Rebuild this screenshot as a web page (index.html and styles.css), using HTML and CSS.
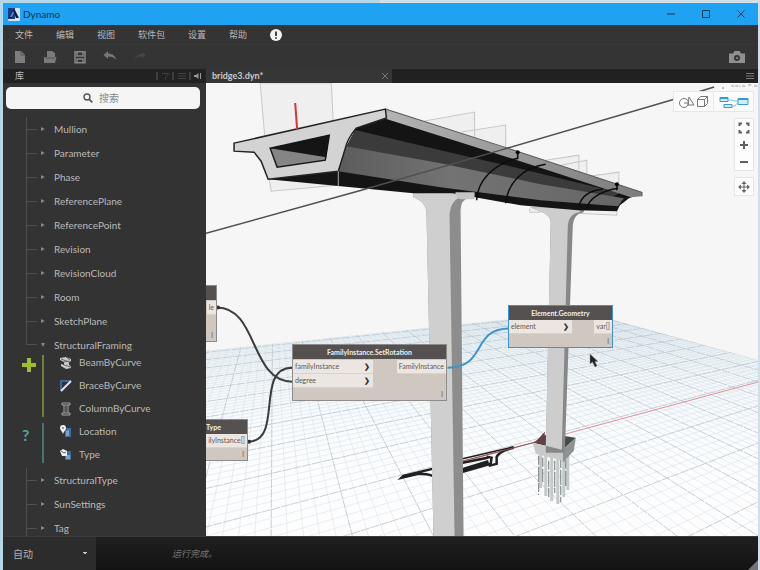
FILE: index.html
```html
<!DOCTYPE html>
<html lang="zh-CN">
<head>
<meta charset="utf-8">
<title>Dynamo</title>
<link rel="stylesheet" href="styles.css">
</head>
<body>
<div class="window">
  <header class="titlebar">
    <svg class="logo" viewBox="0 0 12 13"><rect width="12" height="13" rx="1" fill="#d6e6f6"/><path d="M0 0h7v11H0z" fill="#193a86"/><path d="M1 10L5 2h2l4 8H8L6 5l-2 5z" fill="#101c4c"/><path d="M5 3l-3 6h2l2-4z" fill="#5d8ad0"/></svg>
    <h1>Dynamo</h1>
    <div class="caption">
      <button aria-label="最小化"><svg viewBox="0 0 10 10"><path d="M1 5h8"/></svg></button>
      <button aria-label="最大化"><svg viewBox="0 0 10 10"><path d="M1.500 1.500h7v7h-7z"/></svg></button>
      <button aria-label="关闭"><svg viewBox="0 0 10 10"><path d="M1.500 1.500l7 7M8.500 1.500l-7 7"/></svg></button>
    </div>
  </header>

  <nav class="menu">
    <button>文件</button><button>编辑</button><button>视图</button><button>软件包</button><button>设置</button><button>帮助</button>
    <button class="alert" aria-label="通知"><svg viewBox="0 0 12 12"><circle cx="6" cy="6" r="6" fill="#f3f3f3"/><path d="M6 2.500v4.500M6 8.200v1.600" stroke="#333" stroke-width="1.800"/></svg></button>
  </nav>

  <div class="toolbar">
    <button aria-label="新建"><svg viewBox="0 0 14 14"><path d="M2 1h6l4 4v8H2z" fill="#7d7d7d"/><path d="M8 1v4h4" fill="none" stroke="#555"/></svg></button>
    <button aria-label="打开"><svg viewBox="0 0 14 14"><path d="M4 1h5l3 2v4h1.500l-1.500 6H1V7h3z" fill="#7a7a7a"/><path d="M2 8h10" stroke="#555"/></svg></button>
    <button aria-label="保存"><svg viewBox="0 0 14 14"><path d="M2 1.700h10v11H2zM4 2v4h6V2M4 12V9h6v3" fill="none" stroke="#858585" stroke-width="1.500"/></svg></button>
    <button aria-label="撤消"><svg viewBox="0 0 14 14"><path d="M.5 5L5 1v2.500c4 0 7 2 8.500 6.500C11 7 8.500 6.500 5 6.500V9z" fill="#777"/></svg></button>
    <button aria-label="重做"><svg viewBox="0 0 14 14"><path d="M12.500 5L9 2v2C6 4 3 6 1 9.500 4 7 6 6.500 9 6.500V8z" fill="#474747"/></svg></button>
    <button class="camera" aria-label="相机"><svg viewBox="0 0 16 12"><path d="M0 2.500h4L5.500 0h5L12 2.500h4V12H0z" fill="#909090"/><circle cx="8" cy="7" r="3" fill="#333"/><circle cx="8" cy="7" r="1.300" fill="#777"/></svg></button>
  </div>

  <main class="work">
    <aside class="library">
      <div class="library-head">
        <h2>库</h2>
        <svg viewBox="0 0 46 8"><path d="M1 0v8M17 0v8M34 0v8" stroke="#5a5a5a"/><path d="M6 1.500h7L9.500 5v3M22 1.500h8M22 4h8M22 6.500h8" stroke="#404040" fill="none"/><path d="M38 3h2l2.500-2v6L40 5h-2z" fill="#999"/><path d="M44.500 1v6" stroke="#999"/></svg>
      </div>
      <label class="search">
        <svg viewBox="0 0 10 10"><circle cx="4" cy="4" r="3" fill="none" stroke="#555" stroke-width="1.400"/><path d="M6.300 6.300L9.300 9.300" stroke="#555" stroke-width="1.700"/></svg>
        <input type="text" placeholder="搜索" aria-label="搜索">
      </label>
      <ul class="tree lead">
        <li>Mullion</li><li>Parameter</li><li>Phase</li><li>ReferencePlane</li><li>ReferencePoint</li><li>Revision</li><li>RevisionCloud</li><li>Room</li><li>SketchPlane</li><li class="open">StructuralFraming</li>
      </ul>
      <div class="members">
        <div class="group create">
          <svg class="badge" viewBox="0 0 14 14"><path d="M5 0h4v5h5v4H9v5H5V9H0V5h5z" fill="#9dbf28"/></svg>
          <ul>
            <li><svg viewBox="0 0 14 14"><path d="M1 2l6-1 5 2v2l-2 1v3l2 1v2l-5 1-5-3V8l3 1V6L1 4z" fill="#c9c9c9"/><path d="M2 3l8 3M5 6l5-1M5 9l7 2M7 1l4 3" stroke="#686868"/></svg>BeamByCurve</li>
            <li><svg viewBox="0 0 14 14"><path d="M2 12V2H12" fill="none" stroke="#3d6596" stroke-width="2"/><path d="M2 12L12 2" stroke="#d9e6f2" stroke-width="2"/></svg>BraceByCurve</li>
            <li><svg viewBox="0 0 14 14"><path d="M3 1h8v2H3zM3 11h8v2H3zM5 3v8M9 3v8" fill="none" stroke="#a5a5a5"/><path d="M7 3v8" stroke="#777"/></svg>ColumnByCurve</li>
          </ul>
        </div>
        <div class="group query">
          <span class="badge">?</span>
          <ul>
            <li><svg viewBox="0 0 14 14"><path d="M6 3h6v9H6z" fill="#3f6da2"/><path d="M7 6l3-1v6H7z" fill="#7da2ca"/><path d="M1 3a3 3 0 016 0c0 2-2 3-3 6C3 6 1 5 1 3z" fill="#eee"/><circle cx="4" cy="3" r="1" fill="#777"/></svg>Location</li>
            <li><svg viewBox="0 0 14 14"><path d="M6 3h6v9H6z" fill="#3f6da2"/><path d="M7 7h4v4H7z" fill="#7da2ca"/><path d="M1 3l3-2 4 2v5H3z" fill="#eee"/><path d="M2 3l3 2 2-1" stroke="#666" fill="none"/></svg>Type</li>
          </ul>
        </div>
      </div>
      <ul class="tree tail"><li>StructuralType</li><li>SunSettings</li><li>Tag</li></ul>
    </aside>

    <section class="workspace">
      <div class="tabs">
        <div class="tab"><span>bridge3.dyn*</span><button aria-label="关闭选项卡"><svg viewBox="0 0 8 8"><path d="M1 1l6 6M7 1L1 7" stroke="#777"/></svg></button></div>
        <button class="more" aria-label="更多"><svg viewBox="0 0 8 8"><path d="M0 1.500h8M0 4h8M0 6.500h8" stroke="#777"/></svg></button>
      </div>

      <div class="canvas">
        <svg class="scene" viewBox="206 83 552 452" preserveAspectRatio="xMinYMin slice">
          <defs>
            <clipPath id="ground"><path d="M206 350L582 311L900 399V700H206z"/></clipPath>
            <linearGradient id="haze" x1="0" y1="0" x2="0" y2="1"><stop offset="0" stop-color="#e9f2f7"/><stop offset=".2" stop-color="#f5f9fb"/><stop offset=".45" stop-color="#fdfdfe"/></linearGradient>
            <linearGradient id="deck" x1="0" y1="0" x2="1" y2="0"><stop offset="0" stop-color="#b4b4b4"/><stop offset="1" stop-color="#7c7c7c"/></linearGradient>
            <linearGradient id="web" x1="0" y1="0" x2="1" y2="0"><stop offset="0" stop-color="#5c5c5c"/><stop offset=".4" stop-color="#737373"/><stop offset="1" stop-color="#666"/></linearGradient>
          </defs>
          <g clip-path="url(#ground)" fill="none">
            <path d="M206 300H900V700H206z" fill="url(#haze)"/>
            <path id="minor" stroke="#d2dfe6" stroke-width=".5"/>
            <path id="major" stroke="#b9c4ca" stroke-width=".8" stroke-dasharray="9 1"/>
          </g>
          <path d="M432 469L758 381" stroke="#df8f98" fill="none"/>

          <g class="planes">
            <path d="M260 83L265 140L333 122L331 83z"/>
            <path d="M269 178L271 191L336 185"/>
            <path d="M424 121L474 112V138M461 132L505 125V148M545 160L578 155V170M560 165L586 160V173M588 176L618 172V185M529 208V212H540M576 213L616 215V210"/>
          </g>

          <g id="piles">
            <path d="M540 452V487M545 454V495M551 456V500M557 458V503M563 458V496M567 455V489" stroke="#c4c9c9" stroke-width="3"/>
            <path d="M538 455V494M542 457V481M548 460V498M554 460V492M560 458V501M565 459V486" stroke="#707676" stroke-dasharray="9 2 15 1"/>
            <path d="M532 442L547 433L575 437L562 449z" fill="#444b48"/>
            <path d="M532 442L562 449V460L535 453z" fill="#c7cac9"/><path d="M562 449L575 437L573 450L562 462z" fill="#8d9391"/>
            <path d="M534 442L544 431L544 443z" fill="#673e45"/>
          </g>

          <g id="profile" fill="none" stroke="#202020">
            <path d="M432 468L403 475L401 477L418 473Q427 473 432 475" stroke-width="2.500"/>
            <path d="M462 458L513 446" stroke-width="1.500"/>
            <path d="M513 447Q499 450 496 456V463L488 465M486 456L491 457L490 463L462 471M487 457L462 462" stroke-width="2.500"/>
            <path d="M462 469L488 461" stroke-width="4"/>
            <path d="M440 466L536 441" stroke="#8d555a"/>
          </g>

          <g id="piers">
            <path d="M413 192H470V197Q460 199 460 210L463 535H433L426 213Q426 202 413 197z" fill="#8d8d8d"/>
            <path d="M413 192H465L464 196Q450 198 449 215L454 535H433L426 213Q426 202 413 197z" fill="#cfcfcf"/>
            <path d="M529 207H583V212Q573 213 572 225L564 452H545L550 222Q549 214 539 211z" fill="#878787"/>
            <path d="M529 207H579V212Q568 213 567 226L561 449L545 445L550 222Q549 214 539 211z" fill="#cdcdcd"/>
          </g>

          <g id="girder">
            <path d="M386 117L641 193L628 198L619 205L616 211L577 210L520 205L452 193L413 193L268 179L338 170L345 148L356 128z" fill="#141414"/>
            <path d="M355 130L440 150L505 165L600 188L620 192L608 199L540 187L440 166L346 147z" fill="#3b3b3b"/>
            <path d="M346 146L440 163L540 184L623 198L617 206L540 200L440 187L338 171z" fill="url(#web)"/>
            <path d="M385 109L507 148L641 192V196L630 197L507 157L386 119z" fill="url(#deck)"/>
            <path d="M385 109L507 148L641 192V196" fill="none" stroke="#555"/>
            <path d="M234 143L385 109L386 118L356 128Q347 139 345 148L338 171L268 179L261 161L254 152L234 151z" fill="#d3d3d3" stroke="#242424" stroke-width="1.500"/>
            <path d="M270 148L329 135L325 160L277 167z" fill="#858585" stroke="#171717" stroke-width="1.500"/>
            <path d="M270 148L329 135L326 157z" fill="#151515"/>
            <path d="M338 171V186" stroke="#aaa"/>
            <path d="M455 192H474V199H460L455 196z" fill="#c4c4c4"/>
            <g fill="none" stroke="#0d0d0d" stroke-width="1.500"><path d="M476 200C477 181 492 164 517 158M505 203C507 184 521 167 545 164M578 206C581 194 590 190 602 189M586 208C588 199 599 191 617 188M517 152V159M616 183V190"/></g>
            <circle cx="517" cy="152" r="2"/><circle cx="616" cy="184" r="2"/>
          </g>
          <path d="M206 233L361 190L500 150L674 99L713 87" fill="none" stroke="#505050" stroke-width="1.500"/>
          <path d="M295 103L297 130" stroke="#e0303d" stroke-width="2"/>
          <path d="M730 86h9M741 86h4M747 85h3M753 86h3" stroke="#999" stroke-dasharray="3 1"/><circle cx="722" cy="88" r="1" fill="#aaa"/>

          <g id="wires" fill="none" stroke="#3c3c3c" stroke-width="2">
            <path d="M217 307C258 307 250 381 292 381M248 441C284 441 254 367 292 367"/>
            <path d="M447 367C487 367 470 328 509 328" stroke="#3e92cf"/>
          </g>
          <circle cx="218" cy="307" r="2" fill="#333"/><circle cx="249" cy="441" r="2" fill="#333"/>
        </svg>

        <article class="node source">
          <h3>&nbsp;</h3><div class="ports"><div class="outs"><span>le</span></div></div><footer>l</footer>
        </article>
        <article class="node type">
          <h3>Type</h3><div class="ports"><div class="outs"><span>ilyInstance[]</span></div></div><footer>l</footer>
        </article>
        <article class="node rotation">
          <h3>FamilyInstance.SetRotation</h3>
          <div class="ports"><div class="ins"><span>familyInstance<b>❯</b></span><span>degree<b>❯</b></span></div><div class="outs"><span>FamilyInstance</span></div></div><footer>l</footer>
        </article>
        <article class="node geometry">
          <h3>Element.Geometry</h3>
          <div class="ports"><div class="ins"><span>element<b>❯</b></span></div><div class="outs"><span>var[]</span></div></div><footer>l</footer>
        </article>

        <svg class="pointer" viewBox="0 0 9 13"><path d="M1 0v10l2.500-2L6 13l2-1-2-4.500h3z" fill="#222" stroke="#888" stroke-width=".5"/></svg>

        <div class="overlay">
          <div class="views">
            <button aria-label="三维预览"><svg viewBox="0 0 30 12"><g fill="none" stroke="#777"><circle cx="5" cy="7" r="4.500"/><path d="M5 7h5M10 1l5 8H9zM18.500 3.500h7v7h-7zM18.500 3.500l3-3h7v7l-3 3M25.500 3.500l3-3"/></g></svg></button>
            <button aria-label="图形视图"><svg viewBox="0 0 30 12"><g fill="#d3eaf7" stroke="#369bd3"><path d="M1 1.500h8v4H1zM5 8.500h8v3H5zM19 2.500h10v6H19z"/><path d="M9 4h3l4 1h3M13 10h3l3-4" fill="none" stroke="#8abbd7"/><path d="M1 2h8M19 3h10" stroke-width="2"/></g></svg></button>
          </div>
          <div class="zoom">
            <button aria-label="适合窗口"><svg viewBox="0 0 12 12"><path d="M1.500 4V1.500H4M8 1.500h2.500V4M10.500 8v2.500H8M4 10.500H1.500V8" /></svg></button>
            <button aria-label="放大"><svg viewBox="0 0 12 12"><path d="M6 2v8M2 6h8"/></svg></button>
            <button aria-label="缩小"><svg viewBox="0 0 12 12"><path d="M2 6h8"/></svg></button>
          </div>
          <div class="zoom pan">
            <button aria-label="平移"><svg viewBox="0 0 12 12"><path d="M6 1v10M1 6h10"/><path d="M6 0l2.500 3h-5zM6 12l2.500-3h-5zM0 6l3-2.500v5zM12 6L9 3.500v5z" fill="#666" stroke="none"/></svg></button>
          </div>
        </div>
      </div>
    </section>
  </main>

  <footer class="status">
    <select aria-label="运行模式"><option>自动</option><option>手动</option></select>
    <p>运行完成。</p>
    <svg class="grip" viewBox="0 0 10 10"><path d="M10 0v10H0z" fill="#707478"/></svg>
  </footer>
</div>
<script src="grid.js"></script>
</body>
</html>
```
FILE: styles.css
```css
* { box-sizing: border-box; }
body {
  margin: 0;
  height: 100vh;
  display: flex;
  padding: 3px 2px 0 3px;
  background: linear-gradient(90deg, #b4d7ea 0 50%, #d0dfe8 50%);
  font-family: Lato, "Noto Sans CJK SC", sans-serif;
  font-size: 10px;
  color: #b9b9b9;
}
h1, h2, h3, p, ul { margin: 0; padding: 0; font-weight: 400; font-size: inherit; }
ul { list-style: none; }
button, select, input { font: inherit; color: inherit; border: 0; background: none; padding: 0; margin: 0; }
svg { display: block; }

.window { flex: 1; display: flex; flex-direction: column; min-width: 0; background: #343434; }
.titlebar, .menu, .toolbar, .status { flex-shrink: 0; }
.titlebar { height: 22px; display: flex; align-items: center; gap: 3px; padding-left: 5px; background: #1fa2f1; color: #103451; }
.logo { width: 12px; height: 13px; }
.caption { margin-left: auto; display: flex; }
.caption button { width: 35px; height: 22px; display: grid; place-items: center; }
.caption svg { width: 10px; height: 10px; fill: none; stroke: #123c5c; }

.menu { height: 19px; display: flex; align-items: center; gap: 23px; padding-left: 12px; font-size: 9px; }
.alert svg { width: 12px; height: 12px; }
.toolbar { height: 25px; display: flex; align-items: center; gap: 16px; padding: 0 13px 0 10px; border-top: 1px solid #393939; }
.toolbar svg { width: 14px; height: 14px; }
.toolbar .camera { margin-left: auto; }
.toolbar .camera svg { width: 16px; height: 12px; }

.work { flex: 1; display: grid; grid-template-columns: 203px 1fr; grid-template-rows: minmax(0, 1fr); min-height: 0; }
.library { background: #333; overflow: hidden; }
.library-head { height: 14px; display: flex; align-items: center; justify-content: space-between; padding: 0 4px 0 12px; background: #222; font-size: 9px; line-height: 14px; }
.library-head svg { width: 46px; height: 8px; }
.search { height: 22px; margin: 4px 6px 0 3px; display: flex; align-items: center; justify-content: center; gap: 6px; border-radius: 5px; background: #f5f5f5; color: #888; }
.search svg { width: 10px; height: 10px; }
.search input { width: 24px; outline: 0; }
.search input::placeholder { color: #888; opacity: 1; }

.tree li { position: relative; height: 24px; padding-left: 51px; line-height: 24px; }
.tree li::before { content: ""; position: absolute; left: 23px; top: 0; width: 10px; height: 24px; border-left: 1px solid #4f4f4f; background: linear-gradient(#4f4f4f, #4f4f4f) 0 12px / 10px 1px no-repeat; }
.tree li::after { content: ""; position: absolute; left: 38px; top: 10px; border: 2px solid transparent; border-left: 4px solid #858585; border-right: 0; }
.tree li.open::before { height: 12px; background-position: 0 11px; }
.tree li.open::after { border: 2px solid transparent; border-top: 4px solid #858585; border-bottom: 0; }
.lead { margin-top: 8px; }
.members { margin: -6px 0 2px; }
.group { display: grid; grid-template-columns: 39px 1fr; }
.group .badge { width: 14px; height: 14px; margin: 7px 0 0 19px; }
.group span.badge { font-size: 16px; font-weight: 700; line-height: 16px; color: #4fa89a; }
.group ul { padding-left: 17px; background: linear-gradient(#6f8230, #6f8230) 0 50% / 2px 62px no-repeat; }
.group.query ul { background: linear-gradient(#44766f, #44766f) 0 50% / 2px 40px no-repeat; }
.group li { height: 23px; display: flex; align-items: center; gap: 6px; line-height: 23px; }
.group li svg { width: 14px; height: 14px; }

.workspace { display: flex; flex-direction: column; min-width: 0; }
.tabs { height: 14px; display: flex; flex-shrink: 0; justify-content: space-between; align-items: center; background: #212121; font-size: 9px; font-weight: 700; }
.tab { width: 186px; height: 14px; display: flex; align-items: center; justify-content: space-between; padding: 0 3px 0 6px; background: #363636; color: #c9c9c9; line-height: 14px; }
.tab svg, .more svg { width: 8px; height: 8px; }
.more { margin-right: 4px; }
.canvas { flex: 1; position: relative; overflow: hidden; background: #f6f6f6; }
.scene { position: absolute; inset: 0; width: 100%; height: 100%; }
.planes { fill: #c8c8c8; fill-opacity: .15; stroke: #c8c8c8; }

.node { position: absolute; display: flex; flex-direction: column; background: #cfc7c0; border: 1px solid #8f8b88; color: #5d5956; font-size: 7px; line-height: 14px; }
.node h3 { height: 14px; background: #555150; color: #eee; text-align: center; font-weight: 700; }
.ports { display: flex; align-items: flex-start; }
.ports span { display: flex; justify-content: space-between; height: 14px; line-height: 13px; padding: 0 2px; background: #ebe6e2; border-bottom: 1px solid #d9d3ce; }
.ports b { color: #333; padding-right: 1px; }
.ins { width: 80px; }
.outs { margin-left: auto; }
.node footer { margin-top: auto; text-align: right; padding-right: 3px; line-height: 11px; }
.source { left: -1px; top: 202px; width: 12px; height: 57px; }
.type { left: -1px; top: 336px; width: 43px; height: 42px; }
.type .outs { flex: 1; }
.type .outs span { justify-content: flex-end; padding-left: 0; }
.type h3 { text-align: left; }
.rotation { left: 86px; top: 261px; width: 155px; height: 57px; }
.source .ports, .rotation .ports { padding-top: 1px; }
.geometry { left: 302px; top: 222px; width: 105px; height: 43px; border-color: #3e92cf; }
.geometry .ins { width: 63px; }
.pointer { position: absolute; left: 383px; top: 271px; width: 9px; height: 13px; }

.overlay { position: absolute; right: 4px; top: 8px; display: flex; flex-direction: column; align-items: flex-end; }
.views { display: flex; gap: 1px; background: #e7e7e7; border: 1px solid #e7e7e7; }
.views button { width: 39px; height: 19px; display: grid; place-items: center; background: #fbfbfb; }
.views svg { width: 30px; height: 12px; }
.zoom { display: flex; flex-direction: column; margin-top: 6px; background: #fdfdfd; border: 1px solid #e5e5e5; }
.zoom button { width: 18px; height: 17px; display: grid; place-items: center; }
.zoom svg { width: 12px; height: 12px; fill: none; stroke: #606060; stroke-width: 2; }
.pan svg { stroke-width: 1; }

.status { height: 34px; display: flex; align-items: center; border-top: 1px solid #3a3a3a; background: linear-gradient(#202020, #121212); color: #757575; }
.status select {
  align-self: stretch;
  width: 93px;
  appearance: none;
  padding-left: 10px;
  border-radius: 0;
  color: #b0b0b0;
  background: #2c2c2c conic-gradient(from 315deg at 50% 100%, #c5c5c5 90deg, transparent 0) 79px 15px / 6px 3px no-repeat;
}
.status p { margin-left: 76px; font-size: 9px; font-style: italic; }
.grip { width: 10px; height: 10px; margin-left: auto; align-self: flex-end; }
```
FILE: grid.js
```js
// Ground grid in two-point perspective: every line runs to one of two vanishing points.
const BASE = 535;
const DEPTH = 2;
function lines(vp, start, step, from, to) {
  const out = { minor: "", major: "" };
  for (let k = from; k <= to; k++) {
    const x = start + step * k;
    const endX = vp.x + (x - vp.x) * DEPTH;
    const endY = vp.y + (BASE - vp.y) * DEPTH;
    out[k % 5 === 0 ? "major" : "minor"] += `M${vp.x} ${vp.y}L${endX.toFixed(1)} ${endY.toFixed(1)}`;
  }
  return out;
}
const across = lines({ x: 273, y: 228 }, 271, 16.2, -40, 71);
const along = lines({ x: 1285, y: 239 }, 172, 34.4, -51, 25);
for (const id of ["minor", "major"]) {
  document.getElementById(id).setAttribute("d", across[id] + along[id]);
}
```
